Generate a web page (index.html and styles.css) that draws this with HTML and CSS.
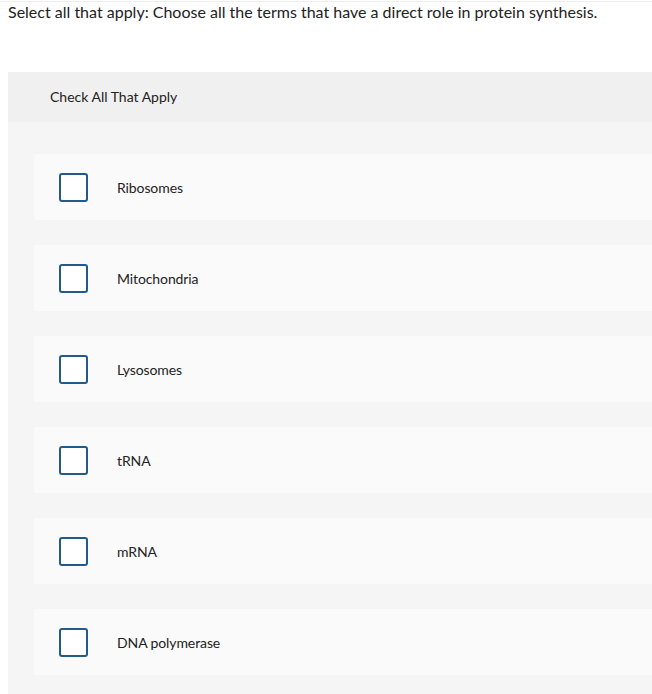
FILE: index.html
```html
<!DOCTYPE html>
<html>
<head>
    <title>Check All That Apply</title>
    <link rel="stylesheet" href="styles.css">
</head>
<body>
    <div class="question">
        <p class="prompt">Select all that apply: Choose all the terms that have a direct role in protein synthesis.</p>

        <div class="answer-panel">
            <div class="panel-header">Check All That Apply</div>
            <div class="choices">
                <label class="choice"><span class="box"></span><span class="choice-text">Ribosomes</span></label>
                <label class="choice"><span class="box"></span><span class="choice-text">Mitochondria</span></label>
                <label class="choice"><span class="box"></span><span class="choice-text">Lysosomes</span></label>
                <label class="choice"><span class="box"></span><span class="choice-text">tRNA</span></label>
                <label class="choice"><span class="box"></span><span class="choice-text">mRNA</span></label>
                <label class="choice"><span class="box"></span><span class="choice-text">DNA polymerase</span></label>
            </div>
        </div>
    </div>
</body>
</html>
```

FILE: styles.css
```css
body {
    margin: 0;
    background: #fff;
    color: #222;
    font-family: Lato, "Open Sans", Arial, sans-serif;
}

.question {
    padding: 0 0 0 8px;
    border-top: 1px solid #eee;
    margin-top: 1px;
}

.prompt {
    margin: 0;
    font-size: 16px;
    line-height: 19px;
    height: 70px;
}

.answer-panel {
    background: #f5f5f5;
}

.panel-header {
    background: #f0f0f0;
    height: 50px;
    padding-left: 42px;
    font-size: 14px;
    line-height: 50px;
}

.choices {
    display: flex;
    flex-direction: column;
    gap: 25px;
    padding: 32px 0 20px 26px;
}

.choice {
    display: flex;
    align-items: center;
    height: 66px;
    background: #fafafa;
    border-radius: 3px 0 0 3px;
    cursor: pointer;
}

.box {
    width: 25px;
    height: 25px;
    margin-left: 25px;
    border: 2px solid #235a8c;
    border-radius: 3px;
    background: #fff;
}

.choice-text {
    margin-left: 29px;
    font-size: 14px;
    letter-spacing: -0.1px;
}
```
